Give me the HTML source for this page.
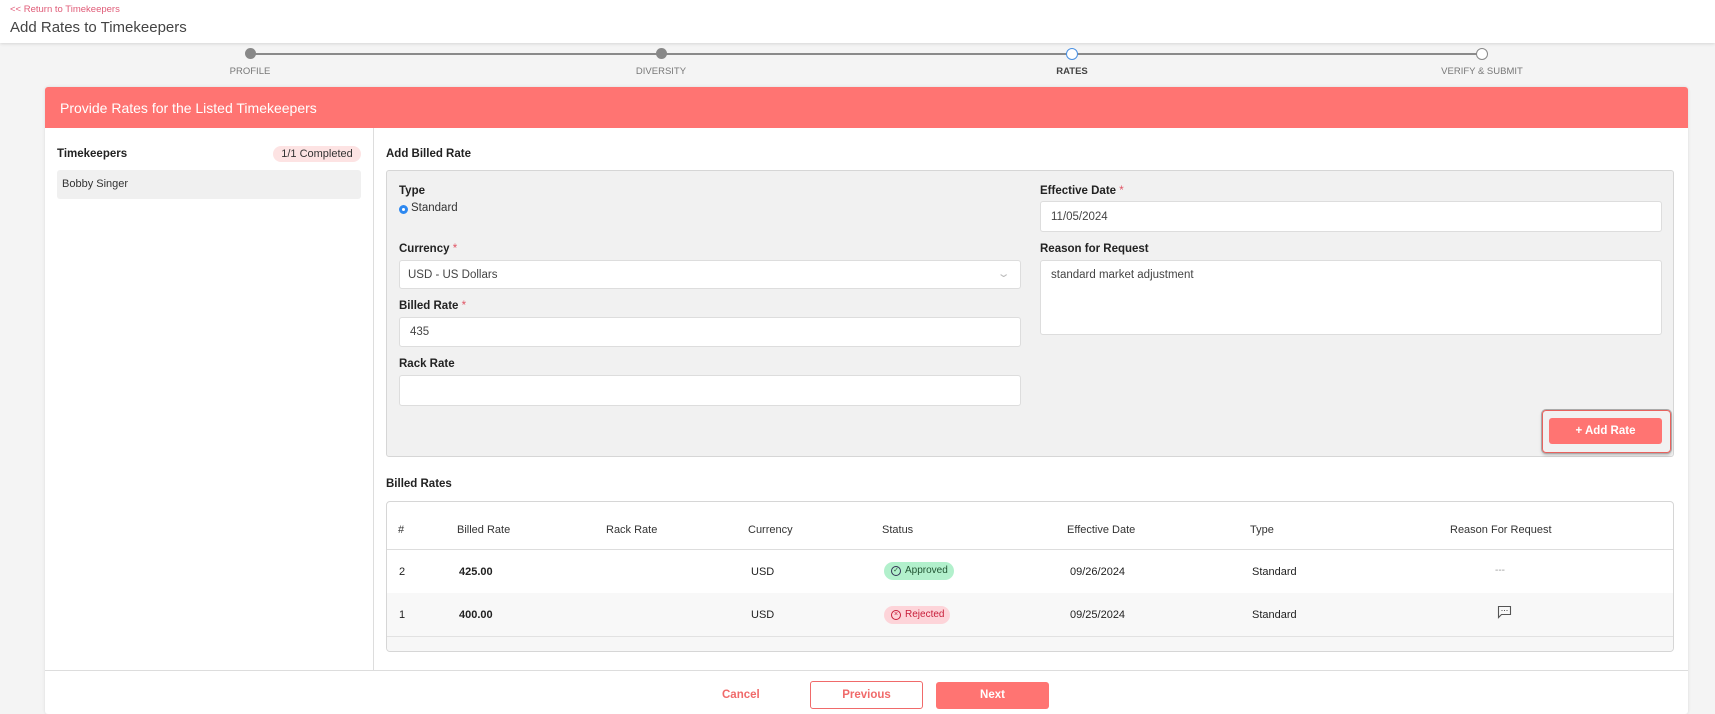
<!DOCTYPE html>
<html><head><meta charset="utf-8"><style>
*{box-sizing:border-box;margin:0;padding:0}
body{width:1715px;height:714px;overflow:hidden;background:#f4f4f4;font-family:"Liberation Sans",sans-serif;color:#222;position:relative}
.a{position:absolute}
.lbl{font-size:11.5px;font-weight:bold;color:#222}
.req{color:#e05565;font-weight:normal}
.inp{background:#fff;border:1px solid #ddd;border-radius:3px;font-size:11.5px;color:#444;padding-left:10px;display:flex;align-items:center}
.th{font-size:11px;color:#333;top:524px}
.td{font-size:11px;color:#222}
.step{font-size:9.5px;color:#777;top:66px;transform:translateX(-50%)}
</style></head><body>
<div class="a" style="left:0;top:0;width:1715px;height:43px;background:#fff;box-shadow:0 1px 3px rgba(0,0,0,.12)"></div>
<div class="a" style="left:10px;top:4px;font-size:9.5px;color:#e05c78">&lt;&lt; Return to Timekeepers</div>
<div class="a" style="left:10px;top:19px;font-size:15px;color:#444">Add Rates to Timekeepers</div>

<div class="a" style="left:250px;top:53px;width:1231px;height:2px;background:#8a8a8a"></div>
<div class="a" style="left:245px;top:48px;width:11px;height:11px;border-radius:50%;background:#888"></div>
<div class="a" style="left:656px;top:48px;width:11px;height:11px;border-radius:50%;background:#888"></div>
<div class="a" style="left:1066px;top:48px;width:12px;height:12px;border-radius:50%;background:#fff;border:1.5px solid #4a90e2"></div>
<div class="a" style="left:1476px;top:48px;width:12px;height:12px;border-radius:50%;background:#fff;border:1.5px solid #888"></div>
<div class="a step" style="left:250px">PROFILE</div>
<div class="a step" style="left:661px">DIVERSITY</div>
<div class="a step" style="left:1072px;color:#444;font-weight:bold">RATES</div>
<div class="a step" style="left:1482px">VERIFY &amp; SUBMIT</div>

<div class="a" style="left:45px;top:87px;width:1643px;height:627px;background:#fff;border-radius:3px;box-shadow:0 0 3px rgba(0,0,0,.1)"></div>
<div class="a" style="left:45px;top:87px;width:1643px;height:41px;background:#ff7472;border-radius:3px 3px 0 0"></div>
<div class="a" style="left:60px;top:100px;font-size:14px;color:#fff">Provide Rates for the Listed Timekeepers</div>
<div class="a" style="left:373px;top:128px;width:1px;height:543px;background:#ddd"></div>
<div class="a" style="left:45px;top:670px;width:1643px;height:1px;background:#ddd"></div>

<div class="a lbl" style="left:57px;top:148px">Timekeepers</div>
<div class="a" style="left:273px;top:146px;width:88px;height:16px;border-radius:8px;background:#fde3e3;font-size:11px;color:#333;text-align:center;line-height:16px">1/1 Completed</div>
<div class="a" style="left:57px;top:170px;width:304px;height:29px;border-radius:3px;background:#f0f0f0;font-size:11px;color:#333;padding-left:5px;line-height:29px">Bobby Singer</div>

<div class="a lbl" style="left:386px;top:148px">Add Billed Rate</div>
<div class="a" style="left:386px;top:170px;width:1288px;height:287px;background:#f1f1f1;border:1px solid #d6d6d6;border-radius:3px"></div>
<div class="a lbl" style="left:399px;top:185px">Type</div>
<div class="a" style="left:399px;top:205px;width:9px;height:9px;border-radius:50%;background:#fff;border:3px solid #2d88f0"></div>
<div class="a" style="left:411px;top:202px;font-size:11.5px;color:#333">Standard</div>
<div class="a lbl" style="left:399px;top:243px">Currency <span class="req">*</span></div>
<div class="a inp" style="left:399px;top:260px;width:622px;height:29px;padding-left:8px">USD - US Dollars<span style="position:absolute;right:12px;top:6px;color:#bbb;font-size:11px;transform:scaleX(1.5)">&#8964;</span></div>
<div class="a lbl" style="left:399px;top:300px">Billed Rate <span class="req">*</span></div>
<div class="a inp" style="left:399px;top:317px;width:622px;height:30px">435</div>
<div class="a lbl" style="left:399px;top:358px">Rack Rate</div>
<div class="a inp" style="left:399px;top:375px;width:622px;height:31px"></div>

<div class="a lbl" style="left:1040px;top:185px">Effective Date <span class="req">*</span></div>
<div class="a inp" style="left:1040px;top:201px;width:622px;height:31px">11/05/2024</div>
<div class="a lbl" style="left:1040px;top:243px">Reason for Request</div>
<div class="a inp" style="left:1040px;top:260px;width:622px;height:75px;align-items:flex-start;padding-top:8px">standard market adjustment</div>

<div class="a" style="left:1542px;top:410px;width:129px;height:43px;border:1.5px solid #e8625e;border-radius:4px;box-shadow:0 0 0 1px #aaa,0 2px 3px rgba(0,0,0,.25)"></div>
<div class="a" style="left:1549px;top:418px;width:113px;height:26px;background:#ff7472;border-radius:3px;color:#fff;font-weight:bold;font-size:11.5px;text-align:center;line-height:26px">+ Add Rate</div>

<div class="a lbl" style="left:386px;top:478px">Billed Rates</div>
<div class="a" style="left:386px;top:501px;width:1288px;height:151px;border:1px solid #d6d6d6;border-radius:4px;overflow:hidden">
 <div class="a" style="left:0;top:47px;width:100%;height:1px;background:#ddd"></div>
 <div class="a" style="left:0;top:91px;width:100%;height:44px;background:#f8f8f8;border-bottom:1px solid #e2e2e2"></div>
 <div class="a" style="left:0;top:135px;width:100%;height:16px;background:#f7f7f7"></div>
</div>
<div class="a th" style="left:398px">#</div>
<div class="a th" style="left:457px">Billed Rate</div>
<div class="a th" style="left:606px">Rack Rate</div>
<div class="a th" style="left:748px">Currency</div>
<div class="a th" style="left:882px">Status</div>
<div class="a th" style="left:1067px">Effective Date</div>
<div class="a th" style="left:1250px">Type</div>
<div class="a th" style="left:1450px">Reason For Request</div>

<div class="a td" style="left:399px;top:566px">2</div>
<div class="a td" style="left:459px;top:566px;font-weight:bold">425.00</div>
<div class="a td" style="left:751px;top:566px">USD</div>
<div class="a" style="left:884px;top:562px;width:70px;height:18px;border-radius:9px;background:#b2f0cc;font-size:10px;color:#225533;line-height:18px;padding-left:21px">Approved<span style="position:absolute;left:7px;top:4px;width:10px;height:10px;border:1px solid #335;border-radius:50%;font-size:7px;line-height:8px;text-align:center;padding:0">✓</span></div>
<div class="a td" style="left:1070px;top:566px">09/26/2024</div>
<div class="a td" style="left:1252px;top:566px">Standard</div>
<div class="a td" style="left:1495px;top:565px;color:#999;font-size:10px">---</div>

<div class="a td" style="left:399px;top:609px">1</div>
<div class="a td" style="left:459px;top:609px;font-weight:bold">400.00</div>
<div class="a td" style="left:751px;top:609px">USD</div>
<div class="a" style="left:884px;top:606px;width:66px;height:18px;border-radius:9px;background:#fdd4d9;font-size:10px;color:#c81e3a;line-height:18px;padding-left:21px">Rejected<span style="position:absolute;left:7px;top:4px;width:10px;height:10px;border:1px solid #c81e3a;border-radius:50%;font-size:7px;line-height:8px;text-align:center;padding:0">×</span></div>
<div class="a td" style="left:1070px;top:609px">09/25/2024</div>
<div class="a td" style="left:1252px;top:609px">Standard</div>
<svg class="a" style="left:1497px;top:605px" width="15" height="14" viewBox="0 0 15 14"><path d="M1.5 1.5h12v8h-9l-3 3z" fill="none" stroke="#555" stroke-width="1.1"/><path d="M4.5 5.5h1M7 5.5h1M9.5 5.5h1" stroke="#555"/></svg>

<div class="a" style="left:722px;top:689px;font-size:11.5px;font-weight:bold;color:#f06a6a">Cancel</div>
<div class="a" style="left:810px;top:681px;width:113px;height:28px;border:1px solid #f06a6a;border-radius:3px;font-size:11.5px;font-weight:bold;color:#f06a6a;text-align:center;line-height:26px">Previous</div>
<div class="a" style="left:936px;top:682px;width:113px;height:27px;background:#ff7472;border-radius:3px;font-size:11.5px;font-weight:bold;color:#fff;text-align:center;line-height:27px">Next</div>
</body></html>
